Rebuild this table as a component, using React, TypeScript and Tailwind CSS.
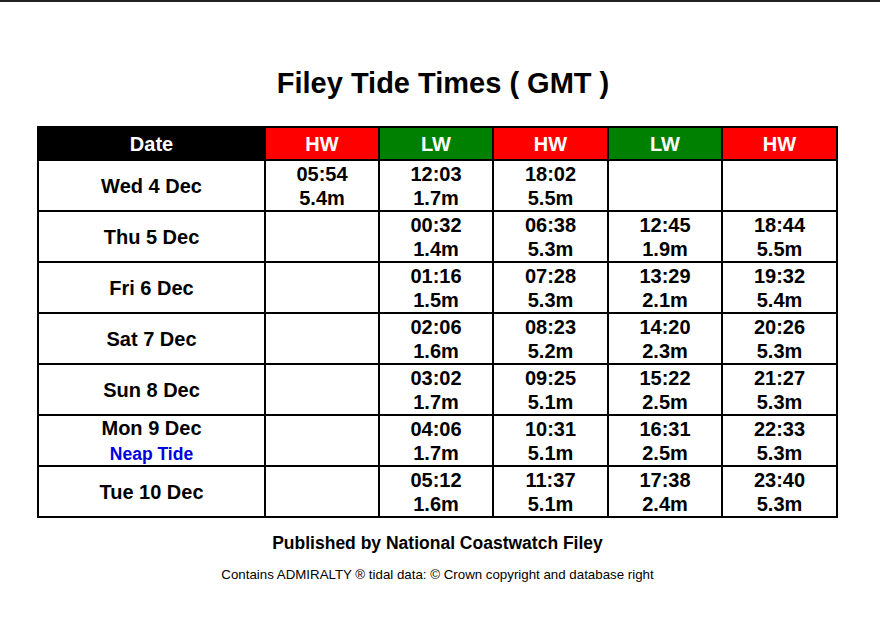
const heads = [
  { label: "HW", bg: "bg-[#ff0000]" },
  { label: "LW", bg: "bg-[#008000]" },
  { label: "HW", bg: "bg-[#ff0000]" },
  { label: "LW", bg: "bg-[#008000]" },
  { label: "HW", bg: "bg-[#ff0000]" },
];

type Tide = [string, string] | null;

const rows: { day: string; note?: string; tides: Tide[] }[] = [
  { day: "Wed 4 Dec", tides: [["05:54", "5.4m"], ["12:03", "1.7m"], ["18:02", "5.5m"], null, null] },
  { day: "Thu 5 Dec", tides: [null, ["00:32", "1.4m"], ["06:38", "5.3m"], ["12:45", "1.9m"], ["18:44", "5.5m"]] },
  { day: "Fri 6 Dec", tides: [null, ["01:16", "1.5m"], ["07:28", "5.3m"], ["13:29", "2.1m"], ["19:32", "5.4m"]] },
  { day: "Sat 7 Dec", tides: [null, ["02:06", "1.6m"], ["08:23", "5.2m"], ["14:20", "2.3m"], ["20:26", "5.3m"]] },
  { day: "Sun 8 Dec", tides: [null, ["03:02", "1.7m"], ["09:25", "5.1m"], ["15:22", "2.5m"], ["21:27", "5.3m"]] },
  { day: "Mon 9 Dec", note: "Neap Tide", tides: [null, ["04:06", "1.7m"], ["10:31", "5.1m"], ["16:31", "2.5m"], ["22:33", "5.3m"]] },
  { day: "Tue 10 Dec", tides: [null, ["05:12", "1.6m"], ["11:37", "5.1m"], ["17:38", "2.4m"], ["23:40", "5.3m"]] },
];

export default function App() {
  return (
    <div className="w-[880px] h-[622px] bg-white text-black font-['Liberation_Sans',Arial,sans-serif] overflow-hidden">
      <div className="h-[2px] bg-[#222]" />
      <h1 className="mt-[64px] pl-[6px] text-center text-[29px] leading-[34px] font-bold">
        Filey Tide Times ( GMT )
      </h1>

      <div className="ml-[37px] mt-[26px] w-[801px] grid grid-cols-[227px_114px_114px_115px_114px_115px] border-t-2 border-l-2 border-black">
        <div className="h-[33px] bg-black border-r-2 border-b-2 border-black flex items-center justify-center text-white text-[20px] font-bold">
          Date
        </div>
        {heads.map((h, i) => (
          <div
            key={i}
            className={`h-[33px] ${h.bg} border-r-2 border-b-2 border-black flex items-center justify-center text-white text-[20px] font-bold`}
          >
            {h.label}
          </div>
        ))}

        {rows.map((r) => (
          <div key={r.day} className="contents">
            <div className="h-[51px] border-r-2 border-b-2 border-black flex flex-col items-center justify-center font-bold">
              <span className="text-[20px] leading-[24px]">{r.day}</span>
              {r.note && (
                <span className="text-[17.5px] leading-[24px] mt-[2px] text-[#0000e0]">{r.note}</span>
              )}
            </div>
            {r.tides.map((t, i) => (
              <div
                key={i}
                className="h-[51px] border-r-2 border-b-2 border-black flex flex-col items-center justify-center text-[20px] leading-[24px] font-bold"
              >
                {t && (
                  <>
                    <span>{t[0]}</span>
                    <span>{t[1]}</span>
                  </>
                )}
              </div>
            ))}
          </div>
        ))}
      </div>

      <div className="w-[801px] ml-[37px] mt-[13px] text-center text-[17.5px] leading-[24px] font-bold">
        Published by National Coastwatch Filey
      </div>
      <div className="w-[801px] ml-[37px] mt-[11px] text-center text-[13.3px] leading-[18px]">
        Contains ADMIRALTY ® tidal data: © Crown copyright and database right
      </div>
    </div>
  );
}
